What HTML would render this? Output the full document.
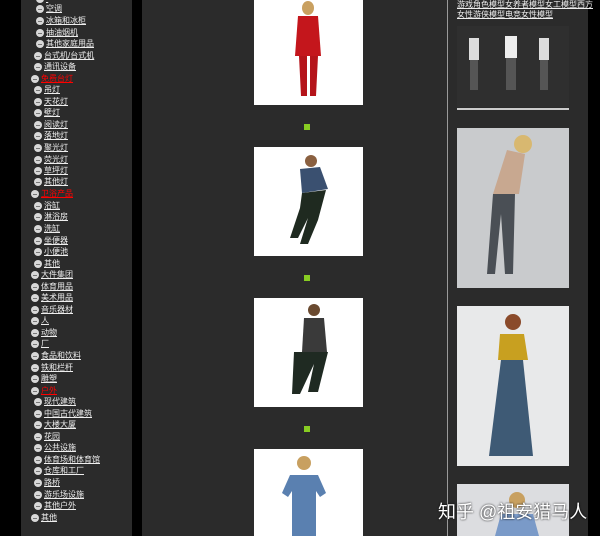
<!DOCTYPE html>
<html><head><meta charset="utf-8"><style>
*{margin:0;padding:0;box-sizing:border-box}
html,body{width:600px;height:536px;overflow:hidden}
body{background:#000;position:relative;font-family:"Liberation Sans","Noto Sans CJK SC",sans-serif}
.a{position:absolute}
.side{left:21px;top:0;width:111px;height:536px;background:#2b2b2b}
.main{left:142px;top:0;width:305px;height:536px;background:#2b2b2b}
.vl{left:447px;top:0;width:1px;height:536px;background:#9a9a9a}
.right{left:448px;top:0;width:140px;height:536px;background:#2b2b2b}
.it{position:absolute;font-size:8px;line-height:10px;color:#eee;text-decoration:underline;white-space:nowrap}
.it i{position:absolute;left:-10px;top:1px;width:8px;height:8px;border-radius:50%;background:#d8d8d8}
.it i:after{content:"";position:absolute;left:2px;top:3.5px;width:4px;height:1px;background:#777}
.r{color:#f00}
.img{position:absolute;background:#fff}
.g{position:absolute;left:304px;width:6px;height:6px;background:#8c2}
</style></head><body>
<div class="a side"></div><div class="a main"></div><div class="a vl"></div><div class="a right"></div>

<div class="it" style="left:46px;top:-6px"><i></i>&nbsp;</div>
<div class="it" style="left:46px;top:4px"><i></i>空调</div>
<div class="it" style="left:46px;top:16px"><i></i>冰箱和冰柜</div>
<div class="it" style="left:46px;top:28px"><i></i>抽油烟机</div>
<div class="it" style="left:46px;top:39px"><i></i>其他家庭用品</div>
<div class="it" style="left:44px;top:51px"><i></i>台式机/台式机</div>
<div class="it" style="left:44px;top:62px"><i></i>通讯设备</div>
<div class="it r" style="left:41px;top:74px"><i></i>免费台灯</div>
<div class="it" style="left:44px;top:85px"><i></i>吊灯</div>
<div class="it" style="left:44px;top:97px"><i></i>天花灯</div>
<div class="it" style="left:44px;top:108px"><i></i>壁灯</div>
<div class="it" style="left:44px;top:120px"><i></i>阅读灯</div>
<div class="it" style="left:44px;top:131px"><i></i>落地灯</div>
<div class="it" style="left:44px;top:143px"><i></i>聚光灯</div>
<div class="it" style="left:44px;top:155px"><i></i>荧光灯</div>
<div class="it" style="left:44px;top:166px"><i></i>草坪灯</div>
<div class="it" style="left:44px;top:177px"><i></i>其他灯</div>
<div class="it r" style="left:41px;top:189px"><i></i>卫浴产品</div>
<div class="it" style="left:44px;top:201px"><i></i>浴缸</div>
<div class="it" style="left:44px;top:212px"><i></i>淋浴房</div>
<div class="it" style="left:44px;top:224px"><i></i>洗缸</div>
<div class="it" style="left:44px;top:236px"><i></i>坐便器</div>
<div class="it" style="left:44px;top:247px"><i></i>小便池</div>
<div class="it" style="left:44px;top:259px"><i></i>其他</div>
<div class="it" style="left:41px;top:270px"><i></i>大件集团</div>
<div class="it" style="left:41px;top:282px"><i></i>体育用品</div>
<div class="it" style="left:41px;top:293px"><i></i>美术用品</div>
<div class="it" style="left:41px;top:305px"><i></i>音乐器材</div>
<div class="it" style="left:41px;top:316px"><i></i>人</div>
<div class="it" style="left:41px;top:328px"><i></i>动物</div>
<div class="it" style="left:41px;top:339px"><i></i>厂</div>
<div class="it" style="left:41px;top:351px"><i></i>食品和饮料</div>
<div class="it" style="left:41px;top:363px"><i></i>铁和栏杆</div>
<div class="it" style="left:41px;top:374px"><i></i>雕塑</div>
<div class="it r" style="left:41px;top:386px"><i></i>户外</div>
<div class="it" style="left:44px;top:397px"><i></i>现代建筑</div>
<div class="it" style="left:44px;top:409px"><i></i>中国古代建筑</div>
<div class="it" style="left:44px;top:420px"><i></i>大楼大厦</div>
<div class="it" style="left:44px;top:432px"><i></i>花园</div>
<div class="it" style="left:44px;top:443px"><i></i>公共设施</div>
<div class="it" style="left:44px;top:455px"><i></i>体育场和体育馆</div>
<div class="it" style="left:44px;top:466px"><i></i>仓库和工厂</div>
<div class="it" style="left:44px;top:478px"><i></i>路桥</div>
<div class="it" style="left:44px;top:490px"><i></i>游乐场设施</div>
<div class="it" style="left:44px;top:501px"><i></i>其他户外</div>
<div class="it" style="left:41px;top:513px"><i></i>其他</div>

<div class="img" style="left:254px;top:0;width:109px;height:105px">
<svg width="109" height="105"><ellipse cx="54" cy="8" rx="6" ry="7" fill="#c9a060"/><path d="M44 16h20l3 40h-26z" fill="#c4161c"/><path d="M45 56h8v40h-6zM56 56h8l-2 40h-6z" fill="#b5141a"/></svg></div>
<div class="g" style="top:124px"></div>
<div class="img" style="left:254px;top:147px;width:109px;height:109px">
<svg width="109" height="109"><circle cx="57" cy="14" r="6" fill="#8a6040"/><path d="M46 22l20-2 8 22-26 4z" fill="#3a5070"/><path d="M48 46l24-3-8 30-10 24h-8l8-26-10 20h-8l10-30z" fill="#1f2a20"/></svg></div>
<div class="g" style="top:275px"></div>
<div class="img" style="left:254px;top:298px;width:109px;height:109px">
<svg width="109" height="109"><circle cx="60" cy="12" r="6" fill="#6a4a30"/><path d="M50 20h20l3 34H48z" fill="#3a3a3a"/><path d="M40 54h34l-10 40h-10l6-28-14 30h-8z" fill="#1f2a22"/></svg></div>
<div class="g" style="top:426px"></div>
<div class="img" style="left:254px;top:449px;width:109px;height:87px">
<svg width="109" height="87"><circle cx="50" cy="14" r="7" fill="#c8a060"/><path d="M36 26h28l8 18-6 4-4-6v45H38V42l-4 6-6-4z" fill="#5a80b0"/></svg></div>

<div class="a" style="left:457px;top:0;font-size:8px;line-height:10px;color:#eee;text-decoration:underline;white-space:nowrap">游戏角色模型女养者模型女工模型西方<br>女性游侠模型电竞女性模型</div>
<div class="img" style="left:457px;top:26px;width:112px;height:81px;background:#2f2f2f">
<svg width="112" height="81"><rect x="12" y="12" width="10" height="22" fill="#ddd"/><rect x="13" y="34" width="8" height="30" fill="#555"/><rect x="48" y="10" width="12" height="22" fill="#eee"/><rect x="49" y="32" width="10" height="32" fill="#555"/><rect x="82" y="12" width="10" height="22" fill="#ddd"/><rect x="83" y="34" width="8" height="30" fill="#555"/></svg></div>
<div class="a" style="left:457px;top:108px;width:112px;height:2px;background:#ccc"></div>
<div class="img" style="left:457px;top:128px;width:112px;height:160px;background:#c9cbcd">
<svg width="112" height="160"><circle cx="66" cy="16" r="9" fill="#d8b870"/><path d="M50 22l18 4-6 40H36z" fill="#c8a890"/><path d="M36 66h22l-2 80h-8l-4-60-6 60h-8z" fill="#4a4f55"/></svg></div>
<div class="img" style="left:457px;top:306px;width:112px;height:160px;background:#e8e9ea">
<svg width="112" height="160"><circle cx="56" cy="16" r="8" fill="#8a4a2a"/><path d="M43 28h24l4 26H41z" fill="#c8a020"/><path d="M44 54h22l10 96H32z" fill="#3e5a75"/></svg></div>
<div class="img" style="left:457px;top:484px;width:112px;height:52px;background:#dcdde0">
<svg width="112" height="52"><circle cx="60" cy="16" r="8" fill="#c8a060"/><path d="M44 30h32l6 22H38z" fill="#7a9ac8"/></svg></div>
<div class="a" style="left:438px;top:498px;font-size:18px;color:#fff;white-space:nowrap;text-shadow:0 0 2px #000">知乎 @祖安猎马人</div>
</body></html>
